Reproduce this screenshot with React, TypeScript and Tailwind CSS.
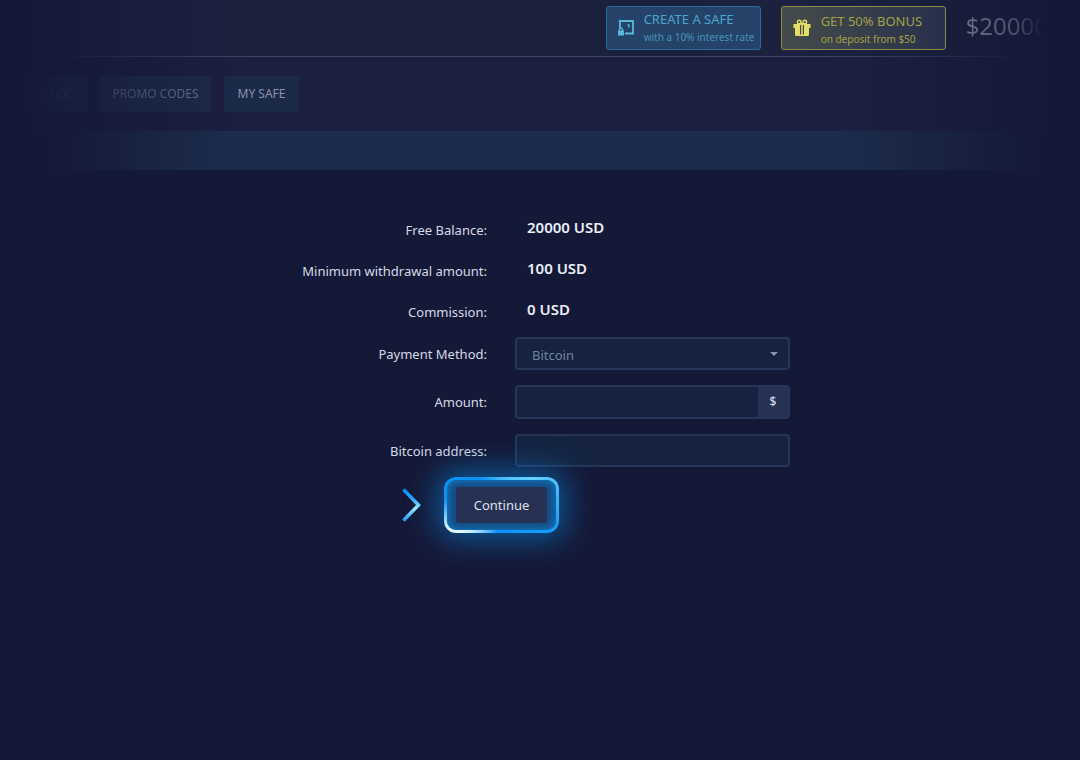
import React, { useState } from 'react';

type FormRowProps = {
  label: string;
  htmlFor?: string;
  children: React.ReactNode;
};

const SafeIcon = () => (
  <svg width="18" height="18" viewBox="0 0 18 18" fill="none" stroke="#58b8da" className="shrink-0">
    <path d="M3 9V2h13v12.500H8" strokeWidth="1.800" />
    <path d="M3.500 2H1.500M3.500 5.500H2" strokeWidth="1.200" />
    <path d="M10.500 6h2M12 6v2.500" strokeWidth="1.300" />
    <path d="M2.500 12v-1.500a1.500 1.500 0 0 1 3 0V12" strokeWidth="1.300" />
    <rect x="1" y="11.500" width="6" height="5" fill="#58b8da" stroke="none" />
  </svg>
);

const GiftIcon = () => (
  <svg width="18" height="18" viewBox="0 0 18 18" fill="#e6dd68" className="shrink-0">
    <path d="M.5 5h6.500v4H.5zM11 5h6.500v4H11zM2 8h5v9H3.500A1.500 1.500 0 0 1 2 15.500zM11 8h5v7.500a1.500 1.500 0 0 1-1.500 1.500H11zM8.200 6h1.600v11H8.200zM6 15.500h6V17H6z" />
    <circle cx="6.200" cy="3" r="1.800" fill="none" stroke="#e6dd68" strokeWidth="1.400" />
    <circle cx="11.800" cy="3" r="1.800" fill="none" stroke="#e6dd68" strokeWidth="1.400" />
    <path d="M7.500 4h3l.5 2H7z" />
  </svg>
);

const FormRow: React.FC<FormRowProps> = ({ label, htmlFor, children }) => (
  <div className="flex items-center gap-7">
    {htmlFor ? (
      <label htmlFor={htmlFor} className="flex-1 text-right">{label}</label>
    ) : (
      <span className="flex-1 pt-[6px] text-right">{label}</span>
    )}
    {children}
  </div>
);

const balances = [
  { label: 'Free Balance:', value: '20000 USD' },
  { label: 'Minimum withdrawal amount:', value: '100 USD' },
  { label: 'Commission:', value: '0 USD' },
];

export default function App() {
  const [method, setMethod] = useState('Bitcoin');
  const [amount, setAmount] = useState('');
  const [address, setAddress] = useState('');

  return (
    <div className="min-h-screen overflow-hidden bg-[#151938] font-['Noto_Sans',sans-serif] text-[13px] leading-5 text-[#d5d9e5]">
      {/* Header, faded out towards both sides */}
      <div className="bg-[linear-gradient(90deg,#151938_3%,#1c1f41_25%,#1c1f41_78%,#151938_97%)]">
        <header className="flex h-14 items-center justify-end bg-[linear-gradient(90deg,#1b213d00_5%,#1b213d_30%,#1b213d_65%,#1b213d00_95%)] pr-8">
          <button className="mr-5 flex h-11 w-[155px] items-center gap-[9px] rounded-[3px] border border-[#2d69a5] bg-[#254269] pl-[10px] text-left text-[#4ba6cb]">
            <SafeIcon />
            <span>
              <span className="block leading-[18px]">CREATE A SAFE</span>
              <span className="block text-[10px] leading-[18px] whitespace-nowrap text-[#4592b9]">with a 10% interest rate</span>
            </span>
          </button>
          <button className="mr-5 flex h-11 w-[165px] items-center gap-[10px] rounded-[3px] border border-[#8f8b42] bg-linear-to-r from-[#464c4b] to-[#27304a] pl-[11px] text-left text-[#a4a044]">
            <GiftIcon />
            <span className="pt-1">
              <span className="block leading-[18px]">GET 50% BONUS</span>
              <span className="block text-[10px] leading-[18px] whitespace-nowrap">on deposit from $50</span>
            </span>
          </button>
          <div className="bg-[linear-gradient(90deg,#6b6c86,#4d4f6c_60%,#151938_94%)] bg-clip-text pb-1 text-2xl text-transparent">
            $20000
          </div>
        </header>
        <div className="mx-14 h-px bg-[linear-gradient(90deg,transparent,#444563_20%,#444563_80%,transparent)]" />
        <nav className="flex h-[74px] items-center gap-[13px] pl-7 text-xs">
          <a href="#back" className="flex h-9 w-[59px] items-center justify-end bg-linear-to-r from-transparent to-[#171f3f] pr-4">
            <span className="bg-linear-to-r from-[#171b3b] to-[#262c4c] bg-clip-text text-transparent">BACK</span>
          </a>
          <a href="#promo" className="flex h-9 w-[111px] items-center justify-center bg-linear-to-r from-[#182041] to-[#1b2847]">
            <span className="bg-linear-to-r from-[#394260] to-[#626c88] bg-clip-text text-transparent">PROMO CODES</span>
          </a>
          <a href="#safe" className="flex h-9 w-[75px] items-center justify-center bg-[#1c2a4a] text-[#8991a8]">MY SAFE</a>
        </nav>
        <div className="h-[39px] bg-[linear-gradient(90deg,#151938_5%,#1c2c4c_21%,#1c2c4c_78%,#151938_96%)]" />
      </div>

      <form onSubmit={(e) => e.preventDefault()} className="mx-auto mt-11 w-[500px] max-w-full">
        {balances.map((item) => (
          <div key={item.label} className="h-[41px]">
            <FormRow label={item.label}>
              <strong className="w-[275px] pl-3 text-[15px] font-semibold text-[#e9edf5]">{item.value}</strong>
            </FormRow>
          </div>
        ))}
        <div className="flex flex-col gap-[15px]">
          <FormRow label="Payment Method:" htmlFor="method">
            <div className="relative w-[275px]">
              <select
                id="method"
                value={method}
                onChange={(e) => setMethod(e.target.value)}
                className="block h-[33px] w-full appearance-none rounded-[4px] border-2 border-[#263658] bg-[#152341] px-[15px] pt-[2px] text-[#7182a0]"
              >
                <option>Bitcoin</option>
              </select>
              <svg width="8" height="4" viewBox="0 0 8 4" fill="#8796b0" className="pointer-events-none absolute top-[15px] right-3">
                <path d="M0 0h8L4 4z" />
              </svg>
            </div>
          </FormRow>
          <FormRow label="Amount:" htmlFor="amount">
            <div className="flex h-[34px] w-[275px] overflow-hidden rounded-[4px] border-2 border-[#263658] bg-[#152341]">
              <input id="amount" value={amount} onChange={(e) => setAmount(e.target.value)} className="min-w-0 flex-1 px-3 outline-none" />
              <span className="flex w-[30px] items-center justify-center bg-[#263154] text-xs font-medium">$</span>
            </div>
          </FormRow>
          <FormRow label="Bitcoin address:" htmlFor="address">
            <input
              id="address"
              value={address}
              onChange={(e) => setAddress(e.target.value)}
              className="h-[33px] w-[275px] rounded-[4px] border-2 border-[#263658] bg-[#152341] px-3 outline-none"
            />
          </FormRow>
        </div>

        {/* Highlighted action */}
        <div className="mt-[10px] flex items-center gap-[22px] pl-28">
          <svg width="20" height="34" viewBox="0 0 20 34" fill="none">
            <defs>
              <linearGradient id="arrow" x1="0" y1="0" x2="0" y2="1">
                <stop offset="0.050" stopColor="#0c91f7" />
                <stop offset="0.300" stopColor="#2aa9fb" />
                <stop offset="0.600" stopColor="#a5ecff" />
                <stop offset="0.950" stopColor="#28a6fc" />
              </linearGradient>
            </defs>
            <path d="M1.500 1.500L16.500 17 1.500 32.500" stroke="url(#arrow)" strokeWidth="3.500" />
          </svg>
          <div className="rounded-xl bg-[conic-gradient(from_0deg,#49bcff,#65cfff_50deg,#189cff_110deg,#0795ff_190deg,#dff8ff_235deg,#dff8ff_245deg,#0c91f5_275deg,#0c91f5_320deg,#49bcff)] p-[3px] shadow-[0_0_30px_6px_#0876c4b3]">
            <div className="rounded-[9px] bg-[#124c85] px-[9px] py-[7px] shadow-[inset_0_0_8px_#1687d0]">
              <button type="submit" className="h-9 w-[91px] rounded-[3px] bg-[#263153] text-[#dce1eb]">Continue</button>
            </div>
          </div>
        </div>
      </form>
    </div>
  );
}
